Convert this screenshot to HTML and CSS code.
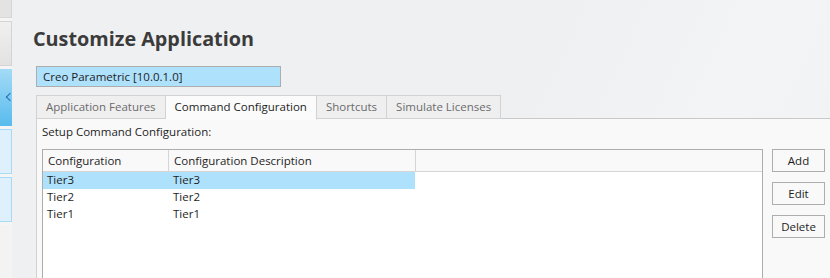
FILE: index.html
```html
<!DOCTYPE html>
<html>
<head>
<meta charset="utf-8">
<link rel="stylesheet" href="styles.css">
</head>
<body>
<div class="app">
  <div class="sidebar">
    <div class="sb-item sb-top"></div>
    <div class="sb-item sb-gray"></div>
    <div class="sb-item sb-active"><span class="chev"></span></div>
    <div class="sb-item sb-light"></div>
    <div class="sb-item sb-light"></div>
    <div class="sb-rest"></div>
  </div>
  <div class="main">
    <h1 class="title">Customize Application</h1>
    <div class="combo">Creo Parametric [10.0.1.0]</div>
    <div class="tabs">
      <div class="tab">Application Features</div>
      <div class="tab active">Command Configuration</div>
      <div class="tab">Shortcuts</div>
      <div class="tab">Simulate Licenses</div>
    </div>
    <div class="panel">
      <div class="label">Setup Command Configuration:</div>
      <div class="content">
        <div class="list">
          <div class="row head">
            <div class="c1">Configuration</div>
            <div class="c2">Configuration Description</div>
            <div class="c3"></div>
          </div>
          <div class="row sel">
            <div class="c1">Tier3</div>
            <div class="c2">Tier3</div>
          </div>
          <div class="row">
            <div class="c1">Tier2</div>
            <div class="c2">Tier2</div>
          </div>
          <div class="row">
            <div class="c1">Tier1</div>
            <div class="c2">Tier1</div>
          </div>
        </div>
        <div class="buttons">
          <div class="btn">Add</div>
          <div class="btn">Edit</div>
          <div class="btn">Delete</div>
        </div>
      </div>
    </div>
  </div>
</div>
</body>
</html>
```

FILE: styles.css
```css
* { box-sizing: border-box; }
html, body { margin: 0; padding: 0; }
body {
  width: 830px;
  height: 278px;
  overflow: hidden;
  background: #eff0f2;
  font-family: "Open Sans", "Noto Sans", sans-serif;
  font-size: 11.5px;
  color: #1e1e1e;
}
.app { display: flex; height: 278px; overflow: hidden; }
.sidebar {
  width: 12px;
  display: flex;
  flex-direction: column;
  gap: 3px;
  background: #f5f5f5;
}
.sb-item { width: 12px; flex: none; }
.sb-top { height: 18px; background: #e3e3e3; border: 1px solid #d6d6d6; border-top: none; border-left: none; }
.sb-gray { height: 45px; background: linear-gradient(#f0f0f0, #e2e2e2); border: 1px solid #d4d4d4; border-left: none; }
.sb-active {
  height: 57px;
  background: linear-gradient(#a3dbf6, #58bbee);
  position: relative;
}
.chev {
  position: absolute;
  left: 7px;
  top: 25px;
  width: 6px;
  height: 6px;
  border-left: 1px solid #1f6fb0;
  border-bottom: 1px solid #1f6fb0;
  transform: rotate(45deg);
}
.sb-light { height: 45px; background: #ddf0fb; border: 1px solid #a6dbf5; border-left: none; }
.sb-rest { flex: 1; background: #f3f3f3; }

.main {
  flex: 1;
  padding-left: 24px;
  background: linear-gradient(115deg, #eff0f2 60%, #f3f4f5 80%, #f1f2f3 100%);
}
.title {
  margin: 25px 0 0 -3px;
  font-size: 19.8px;
  font-weight: 700;
  color: #3b3b3b;
  line-height: 27px;
  height: 29px;
}
.combo {
  margin-top: 12px;
  width: 245px;
  height: 21px;
  border: 1px solid #adadad;
  background: #aee1fb;
  padding-left: 6px;
  line-height: 19px;
  color: #1e1e1e;
}
.tabs { display: flex; margin-top: 8px; height: 24px; position: relative; z-index: 1; }
.tab {
  height: 24px;
  padding: 0 9px;
  line-height: 22px;
  border: 1px solid #d2d2d2;
  border-left: none;
  background: #efeff0;
  color: #6b6b6b;
}
.tab:first-child { border-left: 1px solid #d2d2d2; }
.tab.active { background: #fbfbfb; color: #1e1e1e; border-bottom-color: #fbfbfb; height: 25px; }
.panel {
  margin-top: -1px;
  background: #f9f9f9;
  border-top: 1px solid #c9c9c9;
  border-left: 1px solid #d2d2d2;
  height: 160px;
  padding: 5px 0 0 5px;
  overflow: hidden;
}
.label { color: #1e1e1e; line-height: 16px; }
.content { display: flex; margin-top: 9px; }
.list {
  width: 721px;
  height: 140px;
  background: #fff;
  border: 1px solid #adadad;
}
.row { display: flex; height: 17px; line-height: 16px; }
.row .c1 { width: 126px; padding-left: 4px; }
.row .c2 { width: 246px; padding-left: 4px; }
.row.head { height: 22px; line-height: 21px; background: #f9f9f9; border-bottom: 1px solid #d5d5d5; }
.row.head .c1, .row.head .c2 { padding-left: 5px; border-right: 1px solid #d5d5d5; }
.row.head .c2 { width: 247px; }
.row.head .c3 { flex: 1; }
.row.sel { background: #aee1fb; width: 372px; }
.buttons { display: flex; flex-direction: column; gap: 10px; margin-left: 9px; }
.btn {
  width: 53px;
  height: 23px;
  border: 1px solid #adadad;
  background: #f9f9f9;
  text-align: center;
  line-height: 21px;
  color: #1e1e1e;
}
```
